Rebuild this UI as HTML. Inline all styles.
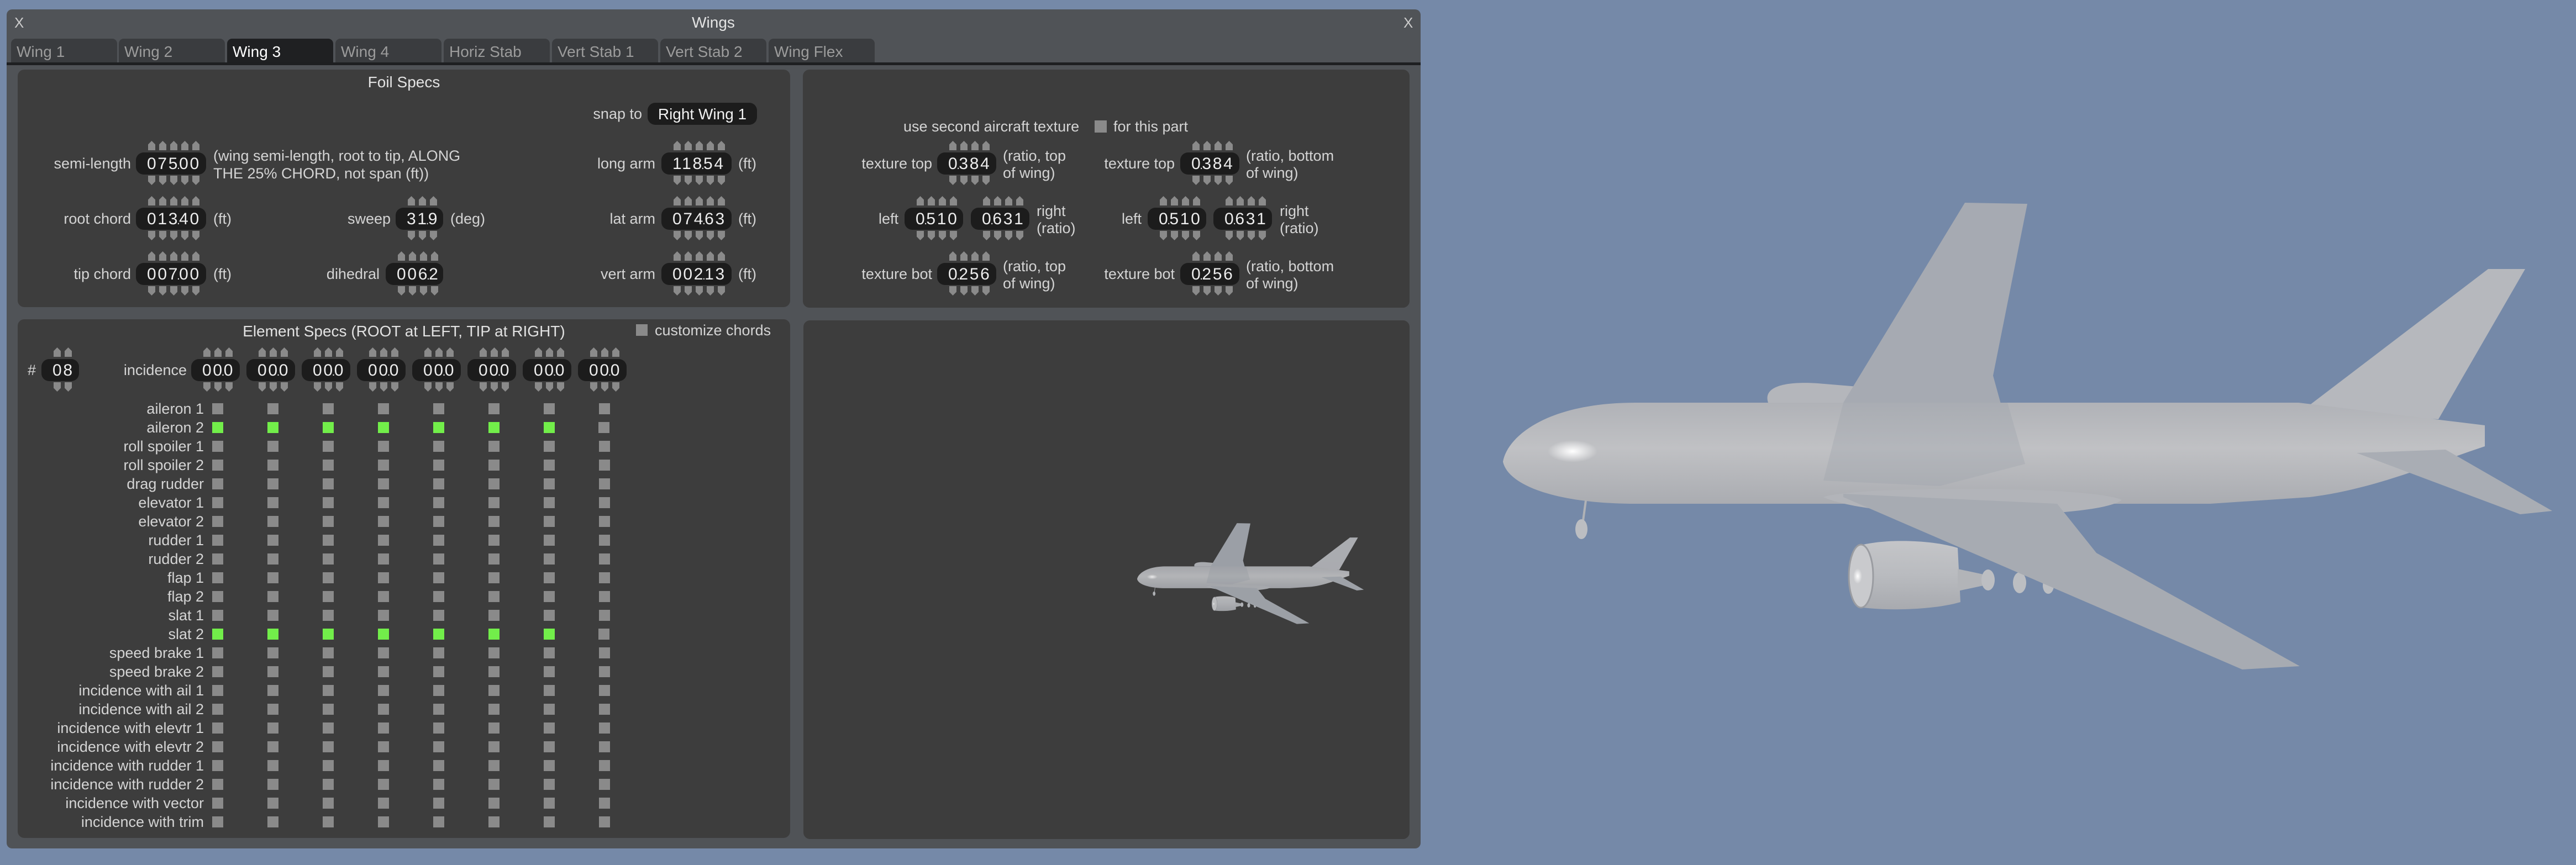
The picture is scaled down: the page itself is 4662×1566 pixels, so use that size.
<!DOCTYPE html>
<html><head><meta charset="utf-8">
<style>
body{margin:0;width:4662px;height:1566px;background:#7589a8;position:relative;overflow:hidden;font-family:"Liberation Sans",sans-serif}
.a{position:absolute}
.win{left:12px;top:17px;width:2559px;height:1519px;background:#505357;border-radius:10px}
.pn{background:#3d3d3d;border-radius:12px}
.t{position:absolute;font-size:27px;color:#d4d4d4;white-space:nowrap;line-height:40px}
.r{text-align:right;width:400px}
.tab{position:absolute;top:70px;height:44px;width:192px;background:#3a3c3f;border-radius:9px 9px 0 0;color:#9c9c9c;font-size:28px;line-height:48px;padding-left:10px;box-sizing:border-box;white-space:nowrap;overflow:hidden}
.sp{position:absolute;height:40px}
.bx{position:absolute;left:0;top:0;height:40px;width:100%;background:#1c1c1c;border-radius:14px}
.v{position:absolute;left:20px;top:0;line-height:41px;font-size:30px;color:#eee;letter-spacing:2.7px;white-space:nowrap}
.dp{display:inline-block;width:0;letter-spacing:0;position:relative;left:-4px;font-size:20px}
.u,.d{position:absolute;left:22px;display:flex;gap:7px}
.u{top:-21px}.d{top:42px}
.u s,.d s{display:block;width:13px;height:17px;background:#8a8a8a}
.u s{clip-path:polygon(50% 0,100% 38%,100% 100%,0 100%,0 38%)}
.d s{clip-path:polygon(0 0,100% 0,100% 62%,50% 100%,0 62%)}
.cb{position:absolute;left:384px;height:20px;width:720px;background:repeating-linear-gradient(90deg,#8a8a8a 0 20px,transparent 20px 100px)}
.cg{position:absolute;left:384px;height:20px;width:620px;background:repeating-linear-gradient(90deg,#72ee4a 0 20px,transparent 20px 100px)}
.cx{position:absolute;left:1083px;height:20px;width:20px;background:#8a8a8a}
.rl{position:absolute;left:-31px;width:400px;text-align:right;font-size:27px;color:#d4d4d4;line-height:34px;white-space:nowrap}
</style></head><body>
<div class="a win"></div>
<div class="t" style="left:26px;top:21px;font-size:26px;color:#ccc">X</div>
<div class="t" style="left:2540px;top:21px;font-size:26px;color:#ccc">X</div>
<div class="t" style="left:1091px;top:21px;width:400px;text-align:center;font-size:28px;color:#e4e4e4">Wings</div>

<div class="tab" style="left:20px">Wing 1</div>
<div class="tab" style="left:215px">Wing 2</div>
<div class="tab" style="left:411px;background:#1f2022;color:#fff">Wing 3</div>
<div class="tab" style="left:607px">Wing 4</div>
<div class="tab" style="left:803px">Horiz Stab</div>
<div class="tab" style="left:999px">Vert Stab 1</div>
<div class="tab" style="left:1195px">Vert Stab 2</div>
<div class="tab" style="left:1391px">Wing Flex</div>
<div class="a" style="left:12px;top:113px;width:2559px;height:5px;background:#1e1f21"></div>

<div class="a pn" style="left:32px;top:126px;width:1398px;height:430px"></div>
<div class="a pn" style="left:1453px;top:126px;width:1098px;height:431px"></div>
<div class="a pn" style="left:32px;top:578px;width:1398px;height:939px"></div>
<div class="a pn" style="left:1454px;top:580px;width:1097px;height:939px"></div>

<!-- Foil specs -->
<div class="t" style="left:431px;top:129px;width:600px;text-align:center;font-size:28px;color:#e2e2e2">Foil Specs</div>
<div class="t r" style="left:762px;top:186px">snap to</div>
<div class="a" style="left:1172px;top:186px;width:198px;height:40px;background:#1c1c1c;border-radius:14px;color:#f2f2f2;font-size:28px;line-height:41px;text-align:center">Right Wing 1</div>

<div class="t r" style="left:-163px;top:276px">semi-length</div>
<div class="sp" style="left:246px;top:276px;width:127px"><div class="bx"></div><div class="v">075<span class="dp">.</span>00</div><div class="u"><s></s><s></s><s></s><s></s><s></s></div><div class="d"><s></s><s></s><s></s><s></s><s></s></div></div>
<div class="t" style="left:386px;top:266px;line-height:32px">(wing semi-length, root to tip, ALONG<br>THE 25% CHORD, not span (ft))</div>

<div class="t r" style="left:-163px;top:376px">root chord</div>
<div class="sp" style="left:246px;top:376px;width:127px"><div class="bx"></div><div class="v">013<span class="dp">.</span>40</div><div class="u"><s></s><s></s><s></s><s></s><s></s></div><div class="d"><s></s><s></s><s></s><s></s><s></s></div></div>
<div class="t" style="left:386px;top:376px">(ft)</div>

<div class="t r" style="left:-163px;top:476px">tip chord</div>
<div class="sp" style="left:246px;top:476px;width:127px"><div class="bx"></div><div class="v">007<span class="dp">.</span>00</div><div class="u"><s></s><s></s><s></s><s></s><s></s></div><div class="d"><s></s><s></s><s></s><s></s><s></s></div></div>
<div class="t" style="left:386px;top:476px">(ft)</div>

<div class="t r" style="left:307px;top:376px">sweep</div>
<div class="sp" style="left:716px;top:376px;width:86px"><div class="bx"></div><div class="v">31<span class="dp">.</span>9</div><div class="u"><s></s><s></s><s></s></div><div class="d"><s></s><s></s><s></s></div></div>
<div class="t" style="left:815px;top:376px">(deg)</div>

<div class="t r" style="left:287px;top:476px">dihedral</div>
<div class="sp" style="left:698px;top:476px;width:104px"><div class="bx"></div><div class="v">006<span class="dp">.</span>2</div><div class="u"><s></s><s></s><s></s><s></s></div><div class="d"><s></s><s></s><s></s><s></s></div></div>

<div class="t r" style="left:786px;top:276px">long arm</div>
<div class="sp" style="left:1197px;top:276px;width:127px"><div class="bx"></div><div class="v">118<span class="dp">.</span>54</div><div class="u"><s></s><s></s><s></s><s></s><s></s></div><div class="d"><s></s><s></s><s></s><s></s><s></s></div></div>
<div class="t" style="left:1336px;top:276px">(ft)</div>
<div class="t r" style="left:786px;top:376px">lat arm</div>
<div class="sp" style="left:1197px;top:376px;width:127px"><div class="bx"></div><div class="v">074<span class="dp">.</span>63</div><div class="u"><s></s><s></s><s></s><s></s><s></s></div><div class="d"><s></s><s></s><s></s><s></s><s></s></div></div>
<div class="t" style="left:1336px;top:376px">(ft)</div>
<div class="t r" style="left:786px;top:476px">vert arm</div>
<div class="sp" style="left:1197px;top:476px;width:127px"><div class="bx"></div><div class="v">002<span class="dp">.</span>13</div><div class="u"><s></s><s></s><s></s><s></s><s></s></div><div class="d"><s></s><s></s><s></s><s></s><s></s></div></div>
<div class="t" style="left:1336px;top:476px">(ft)</div>

<!-- Texture panel -->
<div class="t" style="left:1635px;top:209px">use second aircraft texture</div>
<div class="a" style="left:1981px;top:218px;width:22px;height:22px;background:#8a8a8a"></div>
<div class="t" style="left:2015px;top:209px">for this part</div>

<div class="t r" style="left:1287px;top:276px">texture top</div>
<div class="sp" style="left:1696px;top:276px;width:107px"><div class="bx"></div><div class="v">0<span class="dp">.</span>384</div><div class="u"><s></s><s></s><s></s><s></s></div><div class="d"><s></s><s></s><s></s><s></s></div></div>
<div class="t" style="left:1815px;top:267px;line-height:31px">(ratio, top<br>of wing)</div>
<div class="t r" style="left:1726px;top:276px">texture top</div>
<div class="sp" style="left:2136px;top:276px;width:107px"><div class="bx"></div><div class="v">0<span class="dp">.</span>384</div><div class="u"><s></s><s></s><s></s><s></s></div><div class="d"><s></s><s></s><s></s><s></s></div></div>
<div class="t" style="left:2255px;top:267px;line-height:31px">(ratio, bottom<br>of wing)</div>

<div class="t r" style="left:1226px;top:376px">left</div>
<div class="sp" style="left:1637px;top:376px;width:106px"><div class="bx"></div><div class="v">0<span class="dp">.</span>510</div><div class="u"><s></s><s></s><s></s><s></s></div><div class="d"><s></s><s></s><s></s><s></s></div></div>
<div class="sp" style="left:1757px;top:376px;width:106px"><div class="bx"></div><div class="v">0<span class="dp">.</span>631</div><div class="u"><s></s><s></s><s></s><s></s></div><div class="d"><s></s><s></s><s></s><s></s></div></div>
<div class="t" style="left:1876px;top:367px;line-height:31px">right<br>(ratio)</div>
<div class="t r" style="left:1666px;top:376px">left</div>
<div class="sp" style="left:2077px;top:376px;width:106px"><div class="bx"></div><div class="v">0<span class="dp">.</span>510</div><div class="u"><s></s><s></s><s></s><s></s></div><div class="d"><s></s><s></s><s></s><s></s></div></div>
<div class="sp" style="left:2196px;top:376px;width:106px"><div class="bx"></div><div class="v">0<span class="dp">.</span>631</div><div class="u"><s></s><s></s><s></s><s></s></div><div class="d"><s></s><s></s><s></s><s></s></div></div>
<div class="t" style="left:2316px;top:367px;line-height:31px">right<br>(ratio)</div>

<div class="t r" style="left:1287px;top:476px">texture bot</div>
<div class="sp" style="left:1696px;top:476px;width:107px"><div class="bx"></div><div class="v">0<span class="dp">.</span>256</div><div class="u"><s></s><s></s><s></s><s></s></div><div class="d"><s></s><s></s><s></s><s></s></div></div>
<div class="t" style="left:1815px;top:467px;line-height:31px">(ratio, top<br>of wing)</div>
<div class="t r" style="left:1726px;top:476px">texture bot</div>
<div class="sp" style="left:2136px;top:476px;width:107px"><div class="bx"></div><div class="v">0<span class="dp">.</span>256</div><div class="u"><s></s><s></s><s></s><s></s></div><div class="d"><s></s><s></s><s></s><s></s></div></div>
<div class="t" style="left:2255px;top:467px;line-height:31px">(ratio, bottom<br>of wing)</div>

<!-- Element specs -->
<div class="t" style="left:32px;top:580px;width:1398px;text-align:center;font-size:28px;color:#e2e2e2">Element Specs (ROOT at LEFT, TIP at RIGHT)</div>
<div class="a" style="left:1151px;top:587px;width:21px;height:21px;background:#8a8a8a"></div>
<div class="t" style="left:1185px;top:578px">customize chords</div>

<div class="t" style="left:50px;top:650px">#</div>
<div class="sp" style="left:75px;top:650px;width:68px"><div class="bx"></div><div class="v">08</div><div class="u"><s></s><s></s></div><div class="d"><s></s><s></s></div></div>
<div class="t r" style="left:-62px;top:650px">incidence</div>
<div class="sp" style="left:346px;top:650px;width:88px"><div class="bx"></div><div class="v">00<span class="dp">.</span>0</div><div class="u"><s></s><s></s><s></s></div><div class="d"><s></s><s></s><s></s></div></div>
<div class="sp" style="left:446px;top:650px;width:88px"><div class="bx"></div><div class="v">00<span class="dp">.</span>0</div><div class="u"><s></s><s></s><s></s></div><div class="d"><s></s><s></s><s></s></div></div>
<div class="sp" style="left:546px;top:650px;width:88px"><div class="bx"></div><div class="v">00<span class="dp">.</span>0</div><div class="u"><s></s><s></s><s></s></div><div class="d"><s></s><s></s><s></s></div></div>
<div class="sp" style="left:646px;top:650px;width:88px"><div class="bx"></div><div class="v">00<span class="dp">.</span>0</div><div class="u"><s></s><s></s><s></s></div><div class="d"><s></s><s></s><s></s></div></div>
<div class="sp" style="left:746px;top:650px;width:88px"><div class="bx"></div><div class="v">00<span class="dp">.</span>0</div><div class="u"><s></s><s></s><s></s></div><div class="d"><s></s><s></s><s></s></div></div>
<div class="sp" style="left:846px;top:650px;width:88px"><div class="bx"></div><div class="v">00<span class="dp">.</span>0</div><div class="u"><s></s><s></s><s></s></div><div class="d"><s></s><s></s><s></s></div></div>
<div class="sp" style="left:946px;top:650px;width:88px"><div class="bx"></div><div class="v">00<span class="dp">.</span>0</div><div class="u"><s></s><s></s><s></s></div><div class="d"><s></s><s></s><s></s></div></div>
<div class="sp" style="left:1046px;top:650px;width:88px"><div class="bx"></div><div class="v">00<span class="dp">.</span>0</div><div class="u"><s></s><s></s><s></s></div><div class="d"><s></s><s></s><s></s></div></div>

<div class="rl" style="top:723px">aileron 1</div><div class="cb" style="top:730px"></div>
<div class="rl" style="top:757px">aileron 2</div><div class="cg" style="top:764px"></div><div class="cx" style="top:764px"></div>
<div class="rl" style="top:791px">roll spoiler 1</div><div class="cb" style="top:798px"></div>
<div class="rl" style="top:825px">roll spoiler 2</div><div class="cb" style="top:832px"></div>
<div class="rl" style="top:859px">drag rudder</div><div class="cb" style="top:866px"></div>
<div class="rl" style="top:893px">elevator 1</div><div class="cb" style="top:900px"></div>
<div class="rl" style="top:927px">elevator 2</div><div class="cb" style="top:934px"></div>
<div class="rl" style="top:961px">rudder 1</div><div class="cb" style="top:968px"></div>
<div class="rl" style="top:995px">rudder 2</div><div class="cb" style="top:1002px"></div>
<div class="rl" style="top:1029px">flap 1</div><div class="cb" style="top:1036px"></div>
<div class="rl" style="top:1063px">flap 2</div><div class="cb" style="top:1070px"></div>
<div class="rl" style="top:1097px">slat 1</div><div class="cb" style="top:1104px"></div>
<div class="rl" style="top:1131px">slat 2</div><div class="cg" style="top:1138px"></div><div class="cx" style="top:1138px"></div>
<div class="rl" style="top:1165px">speed brake 1</div><div class="cb" style="top:1172px"></div>
<div class="rl" style="top:1199px">speed brake 2</div><div class="cb" style="top:1206px"></div>
<div class="rl" style="top:1233px">incidence with ail 1</div><div class="cb" style="top:1240px"></div>
<div class="rl" style="top:1267px">incidence with ail 2</div><div class="cb" style="top:1274px"></div>
<div class="rl" style="top:1301px">incidence with elevtr 1</div><div class="cb" style="top:1308px"></div>
<div class="rl" style="top:1335px">incidence with elevtr 2</div><div class="cb" style="top:1342px"></div>
<div class="rl" style="top:1369px">incidence with rudder 1</div><div class="cb" style="top:1376px"></div>
<div class="rl" style="top:1403px">incidence with rudder 2</div><div class="cb" style="top:1410px"></div>
<div class="rl" style="top:1437px">incidence with vector</div><div class="cb" style="top:1444px"></div>
<div class="rl" style="top:1471px">incidence with trim</div><div class="cb" style="top:1478px"></div>

<svg class="a" style="left:0;top:0" width="4662" height="1566" viewBox="0 0 4662 1566">
<defs>
<linearGradient id="fg" x1="0" y1="0" x2="0" y2="1">
<stop offset="0" stop-color="#b0b2b7"/><stop offset=".45" stop-color="#c0c1c4"/><stop offset="1" stop-color="#aaacb1"/>
</linearGradient>
<linearGradient id="eg" x1="0" y1="0" x2="0" y2="1">
<stop offset="0" stop-color="#c4c5c8"/><stop offset=".5" stop-color="#b9bbbf"/><stop offset="1" stop-color="#a8aaaf"/>
</linearGradient>
<radialGradient id="hl"><stop offset="0" stop-color="#ffffff"/><stop offset="1" stop-color="#ffffff" stop-opacity="0"/></radialGradient>
<g id="plane">
<path d="M3200,729 C3190,700 3230,690 3290,694 L3362,700 L3362,729 Z" fill="#b4b6bb"/>
<path d="M3336,729 L3556,367 L3669,369 L3607,680 L3640,800 L3300,800 Z" fill="#a6aab2"/>
<path d="M4162,747 L4503,487 L4570,487 L4413,759 Z" fill="#b6b8bd"/>
<path d="M2720,836 C2728,790 2800,729 2960,729 L4160,729 L4497,770 L4497,808 C4400,840 4300,885 4180,900 L4000,912 L2960,912 C2820,912 2730,880 2720,836 Z" fill="url(#fg)"/>
<path d="M3336,729 L3633,729 L3665,840 L3510,880 L3300,870 Z" fill="#9ea3ab" opacity=".35"/>
<path d="M4265,820 L4426,814 L4619,925 L4561,931 Z" fill="#a9adb4"/>
<path d="M3300,900 C3350,880 3780,878 3840,905 C3800,940 3400,945 3300,900 Z" fill="#b2b4b9"/>
<path d="M3372,986 C3420,975 3500,978 3543,992 L3548,1090 C3500,1104 3420,1106 3372,1100 C3336,1080 3336,1005 3372,986 Z" fill="url(#eg)"/>
<ellipse cx="3368" cy="1043" rx="22" ry="57" fill="#c9cacd" stroke="#9a9ca1" stroke-width="3"/>
<ellipse cx="3362" cy="1043" rx="8" ry="14" fill="url(#hl)"/>
<path d="M3543,1030 L3590,1040 L3590,1060 L3543,1070 Z" fill="#b2b4b8"/>
<ellipse cx="3598" cy="1050" rx="12" ry="19" fill="#bcbec2"/>
<ellipse cx="3655" cy="1055" rx="12" ry="19" fill="#bcbec2"/>
<ellipse cx="3707" cy="1060" rx="10" ry="15" fill="#bcbec2"/>
<path d="M3336,894 L3723,912 L3794,1001 L4162,1206 L4058,1212 L3336,900 Z" fill="#a7abb2"/>
<line x1="2870" y1="906" x2="2864" y2="950" stroke="#b0b2b6" stroke-width="4"/>
<ellipse cx="2862" cy="958" rx="11" ry="18" fill="#bcbec2"/>
<ellipse cx="2846" cy="817" rx="45" ry="20" fill="url(#hl)"/>
</g>
</defs>
<use href="#plane"/>
<g transform="translate(2058 1045) scale(.216) translate(-2720 -820)" opacity=".9"><use href="#plane"/></g>
</svg>
</body></html>
